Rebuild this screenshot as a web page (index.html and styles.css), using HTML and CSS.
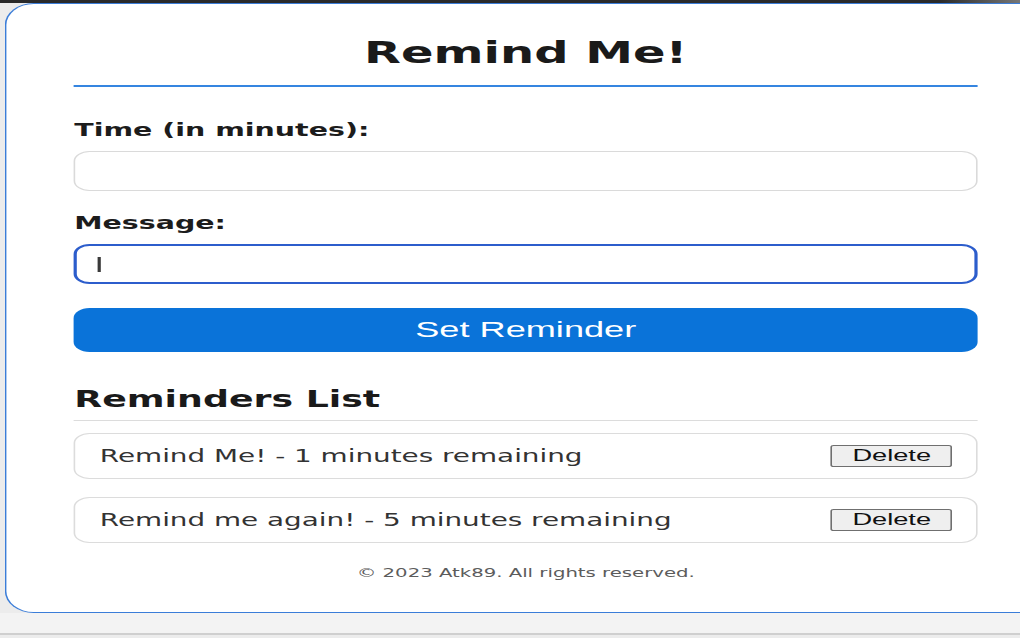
FILE: index.html
```html
<!DOCTYPE html>
<html lang="en">
<head>
<meta charset="utf-8">
<title>Remind Me!</title>
<link rel="stylesheet" href="styles.css">
</head>
<body>
<div class="stage">
  <div class="topbar"></div>
  <div class="panel">
    <div class="content">
      <h1 class="title">Remind Me!</h1>
      <div class="title-rule"></div>

      <label class="label label-time" for="time">Time (in minutes):</label>
      <input class="field" id="time" type="text">

      <label class="label label-msg" for="msg">Message:</label>
      <div class="field-wrap">
        <input class="field field-focused" id="msg" type="text">
        <span class="caret"></span>
      </div>

      <button class="set-btn" type="button">Set Reminder</button>

      <h2 class="list-title">Reminders List</h2>
      <div class="list-rule"></div>

      <ul class="list">
        <li class="item">
          <span class="item-text">Remind Me! - 1 minutes remaining</span>
          <button class="del-btn" type="button">Delete</button>
        </li>
        <li class="item">
          <span class="item-text">Remind me again! - 5 minutes remaining</span>
          <button class="del-btn" type="button">Delete</button>
        </li>
      </ul>

      <p class="footer">© 2023 Atk89. All rights reserved.</p>
    </div>
  </div>
  <div class="floor"></div>
</div>
</body>
</html>
```

FILE: styles.css
```css
html, body {
  margin: 0;
  padding: 0;
  overflow: hidden;
  background: #ededed;
}

.stage {
  width: 637.5px;
  height: 638px;
  overflow: hidden;
  background: #ececec;
  transform: scaleX(1.6);
  transform-origin: 0 0;
  font-family: "DejaVu Sans", Verdana, sans-serif;
  color: #222;
}

.topbar {
  height: 3px;
  background: linear-gradient(to right, #2a2a2a 0, #2a2a2a 92%, #777 100%);
}

.panel {
  box-sizing: border-box;
  margin-left: 3.1px;
  width: 650px;
  height: 610px;
  background: #fff;
  border: 1.5px solid #3b7dd8;
  border-right: none;
  border-radius: 18px 0 0 18px / 22px 0 0 22px;
  padding: 30.5px 0 0 42.3px;
}

.content {
  width: 564.4px;
  display: flex;
  flex-direction: column;
}

.title {
  margin: 0;
  font-size: 30px;
  line-height: 36px;
  font-weight: bold;
  text-align: center;
  color: #1a1a1a;
}

.title-rule {
  margin-top: 14px;
  height: 2px;
  background: #3585e0;
}

.label {
  display: block;
  font-size: 17.8px;
  line-height: 21px;
  font-weight: bold;
  color: #1c1c1c;
}

.label-time {
  margin-top: 32.5px;
}

.label-msg {
  margin-top: 21.5px;
}

.field {
  box-sizing: border-box;
  display: block;
  width: 100%;
  height: 40px;
  margin: 10.5px 0 0;
  border: 1.5px solid #dadada;
  border-radius: 10px;
  background: #fff;
  outline: none;
  padding: 0 14px;
  font-family: "DejaVu Sans", sans-serif;
  font-size: 16px;
}

.field-wrap {
  position: relative;
}

.field-focused {
  border: 2px solid #2c5dcc;
}

.caret {
  position: absolute;
  left: 15px;
  top: 23.5px;
  width: 1.3px;
  height: 15px;
  background: #3a3a3a;
}

.set-btn {
  display: block;
  width: 100%;
  height: 44px;
  margin-top: 24px;
  border: none;
  border-radius: 10px;
  background: #0a73d9;
  color: #fff;
  font-family: "Liberation Sans", Arial, sans-serif;
  font-size: 22.6px;
  line-height: 44px;
  padding: 0;
}

.list-title {
  margin: 34.4px 0 0;
  font-size: 22.7px;
  line-height: 26px;
  font-weight: bold;
  color: #1a1a1a;
}

.list-rule {
  margin-top: 8.6px;
  height: 1px;
  background: #dcdcdc;
}

.list {
  list-style: none;
  margin: 12px 0 0;
  padding: 0;
  display: flex;
  flex-direction: column;
  gap: 18px;
}

.item {
  box-sizing: border-box;
  height: 46px;
  display: flex;
  align-items: center;
  justify-content: space-between;
  border: 1.3px solid #dcdcdc;
  border-radius: 10px;
  padding: 0 14.3px 0 15px;
}

.item-text {
  font-size: 17.4px;
  line-height: 20px;
  color: #333;
}

.del-btn {
  box-sizing: border-box;
  width: 76.3px;
  height: 22px;
  padding: 0;
  border: 1.3px solid #6f6f6f;
  border-radius: 2px;
  background: #efefef;
  color: #111;
  font-family: "Liberation Sans", Arial, sans-serif;
  font-size: 17px;
  line-height: 20px;
}

.footer {
  margin: 23px 0 0;
  font-size: 12.3px;
  line-height: 15px;
  text-align: center;
  color: #5c5c5c;
}

.floor {
  height: 20px;
  background: #f3f3f3;
  border-bottom: 2px solid #cfcfcf;
}
```
